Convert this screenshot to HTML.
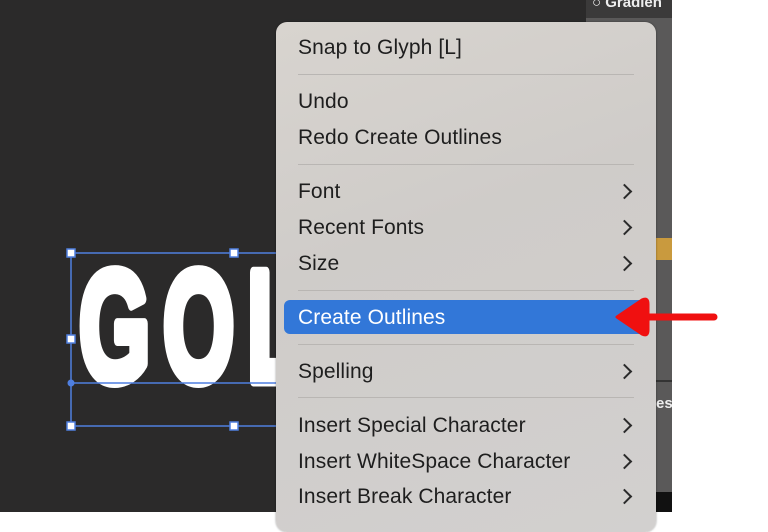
<!DOCTYPE html>
<html><head><style>
body{margin:0;width:768px;height:512px;overflow:hidden;position:relative;background:#fff;font-family:"Liberation Sans",sans-serif}
.bg{position:absolute;left:0;top:0;width:586px;height:512px;background:#2b2a2a}
.panel{position:absolute;left:586px;top:0;width:86px;height:512px;background:#5a5959}
.menu{position:absolute;left:276px;top:22px;width:380px;height:510px;border-radius:11px;background:linear-gradient(160deg,#d8d4cf 0%,#cfccc9 40%,#d2d0cf 100%);box-shadow:0 0 2px rgba(0,0,0,.4)}
.it{position:absolute;left:22px;font-size:21px;color:#1e1e1e;line-height:24px;white-space:nowrap;letter-spacing:0.1px}
.ch{position:absolute;left:343px;width:9px;height:9px;border-right:2.5px solid #2a2a2a;border-top:2.5px solid #2a2a2a;transform:rotate(45deg)}
.sep{position:absolute;left:22px;width:336px;height:1px;background:#b9b6b3}
.hl{position:absolute;left:8px;top:278px;width:364px;height:34px;border-radius:6px;background:#3277d8}
</style></head><body>
<div class="bg"></div>
<div class="panel">
 <div style="position:absolute;left:0;top:0;width:86px;height:18px;background:#3b3a3a"></div>
 <div style="position:absolute;left:6px;top:-6px;color:#eee;font-weight:bold;font-size:15px;white-space:nowrap">○ Gradien</div>
 <div style="position:absolute;left:70px;top:238px;width:16px;height:22px;background:#c99a3e"></div>
 <div style="position:absolute;left:70px;top:380px;width:16px;height:2px;background:#333"></div>
 <div style="position:absolute;left:70px;top:395px;color:#eee;font-weight:bold;font-size:15px">es</div>
 <div style="position:absolute;left:70px;top:492px;width:16px;height:20px;background:#111"></div>
</div>
<svg style="position:absolute;left:0;top:0" width="586" height="512">
 <text x="79" y="381" font-family="Liberation Sans" font-weight="bold" font-size="158" fill="#fff" stroke="#fff" stroke-width="11" stroke-linejoin="round" transform="translate(79 0) scale(0.58 1) translate(-79 0)" letter-spacing="22">GOL</text>
 <g stroke="#4f7fe0" stroke-width="1.5" fill="none">
  <line x1="71" y1="253" x2="276" y2="253"/><line x1="71" y1="383" x2="276" y2="383"/><line x1="71" y1="426" x2="276" y2="426"/><line x1="71" y1="253" x2="71" y2="426"/>
 </g>
 <g fill="#fff" stroke="#4f7fe0" stroke-width="1.5">
  <rect x="67" y="249" width="8" height="8"/><rect x="230" y="249" width="8" height="8"/><rect x="67" y="335" width="8" height="8"/><rect x="67" y="422" width="8" height="8"/><rect x="230" y="422" width="8" height="8"/>
 </g>
 <circle cx="71" cy="383" r="3.5" fill="#4f7fe0"/>
</svg>
<div class="menu">
 <div class="it" style="top:14px">Snap to Glyph [L]</div>
 <div class="sep" style="top:52px"></div>
 <div class="it" style="top:68px">Undo</div>
 <div class="it" style="top:104px">Redo Create Outlines</div>
 <div class="sep" style="top:142px"></div>
 <div class="it" style="top:158px">Font</div><div class="ch" style="top:164px"></div>
 <div class="it" style="top:194px">Recent Fonts</div><div class="ch" style="top:200px"></div>
 <div class="it" style="top:230px">Size</div><div class="ch" style="top:236px"></div>
 <div class="sep" style="top:268px"></div>
 <div class="hl"></div>
 <div class="it" style="top:284px;color:#fff">Create Outlines</div>
 <div class="sep" style="top:322px"></div>
 <div class="it" style="top:338px">Spelling</div><div class="ch" style="top:344px"></div>
 <div class="sep" style="top:375px"></div>
 <div class="it" style="top:392px">Insert Special Character</div><div class="ch" style="top:398px"></div>
 <div class="it" style="top:428px">Insert WhiteSpace Character</div><div class="ch" style="top:434px"></div>
 <div class="it" style="top:463px">Insert Break Character</div><div class="ch" style="top:469px"></div>
</div>
<svg style="position:absolute;left:0;top:0" width="768" height="512">
 <line x1="640" y1="317" x2="714" y2="317" stroke="#f01010" stroke-width="7" stroke-linecap="round"/>
 <path d="M617 317 L642 300 Q648 297 648 304 L648 330 Q648 337 642 334 Z" fill="#f01010" stroke="#f01010" stroke-width="3" stroke-linejoin="round"/>
</svg>
</body></html>
